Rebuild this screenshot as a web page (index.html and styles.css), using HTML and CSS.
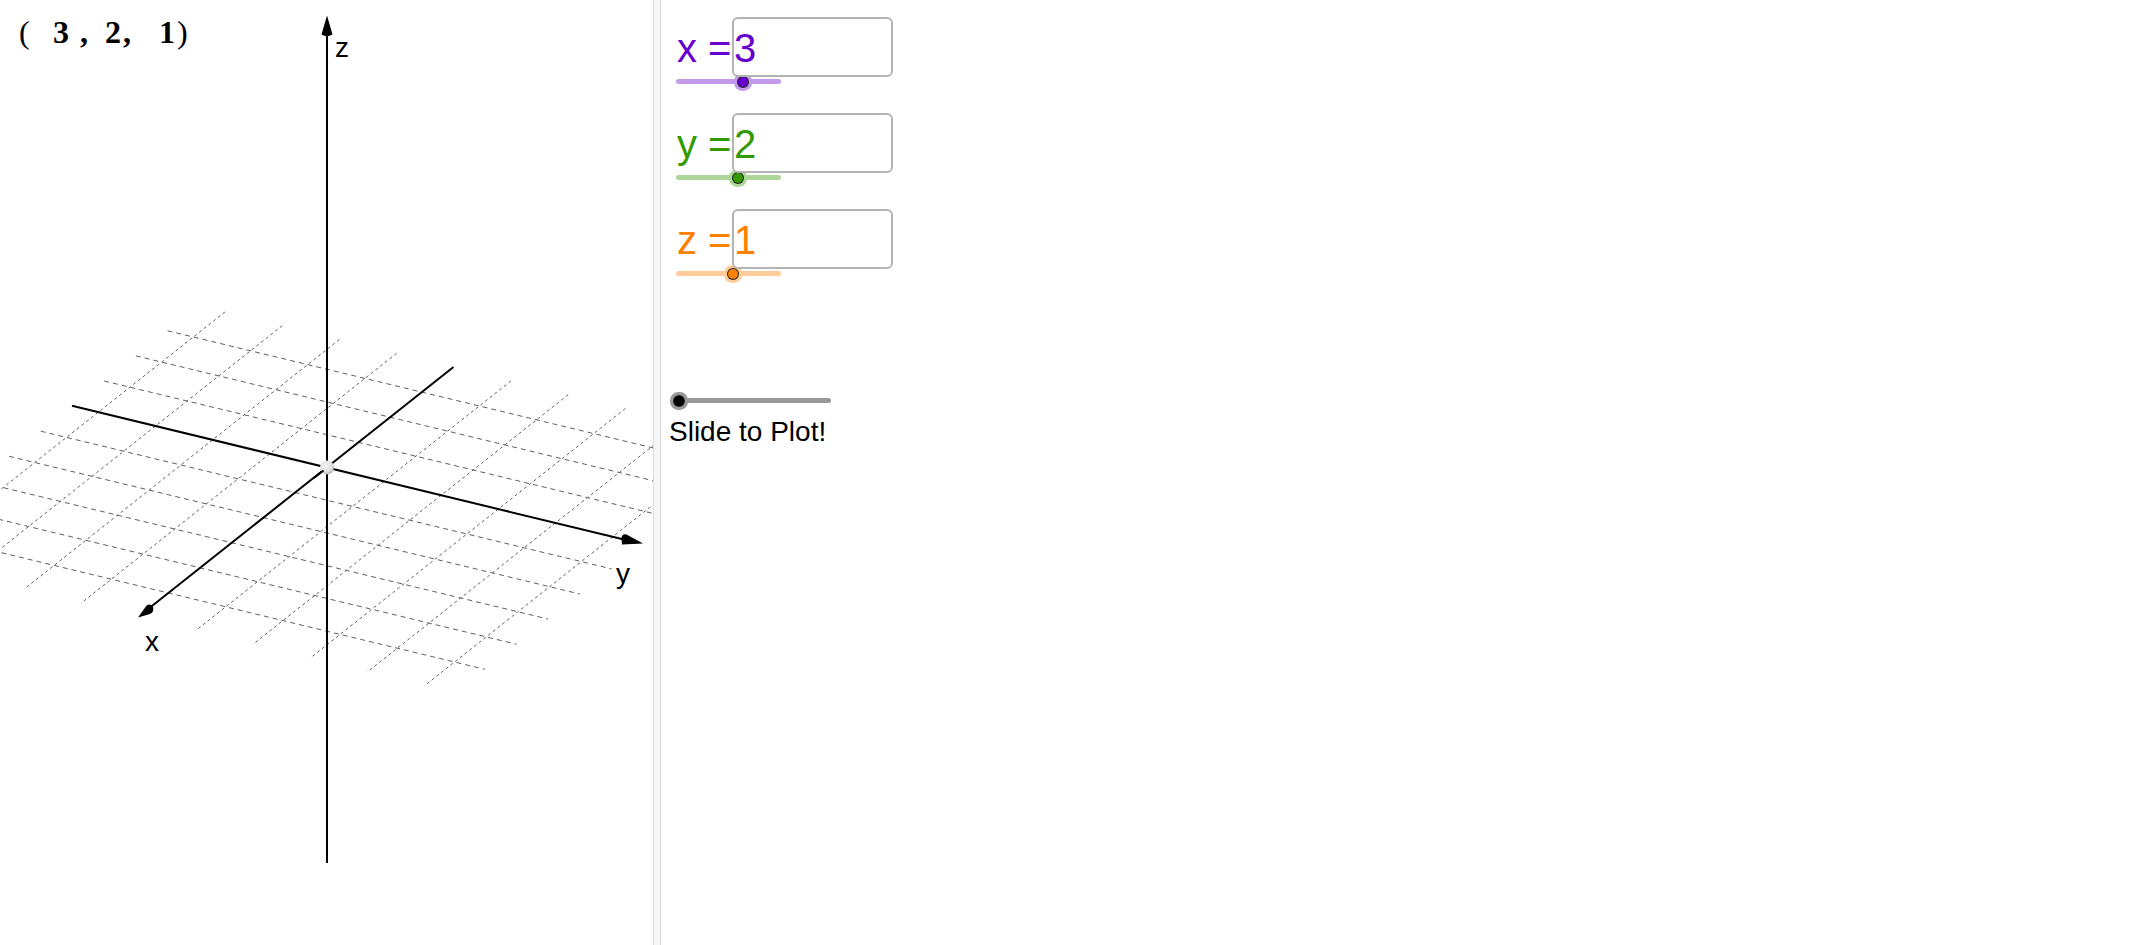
FILE: index.html
```html
<!DOCTYPE html>
<html lang="en">

<head>
    <meta charset="UTF-8">
    <meta name="viewport" content="width=device-width, initial-scale=1.0">
    <title>Plotting Points in 3D</title>
    <link rel="stylesheet" href="styles.css">
</head>

<body>
    <div class="wrapper">
        <div class="view3d">
            <svg class="scene">
                <defs>
                    <radialGradient id="ball" cx="0.4" cy="0.35" r="0.7">
                        <stop offset="0" stop-color="#f4f4f4" />
                        <stop offset="0.6" stop-color="#e2e2e2" />
                        <stop offset="1" stop-color="#b0b0b0" />
                    </radialGradient>
                </defs>
                <!-- grid lines are added by script.js -->
                <g class="grid"></g>

                <!-- axes -->
                <g class="axes">
                    <line x1="327" y1="863" x2="327" y2="30" />
                    <line x1="453.5" y1="367" x2="145" y2="611.5" />
                    <line x1="72" y1="405.8" x2="626" y2="540" />
                </g>
                <path d="M327 15.5 L332.5 34.5 Q327 38 321.5 34.5 Z" />
                <path d="M138 617.5 L146.5 605.5 Q150.5 603 153 607 Q154.5 612 150 614 Z" />
                <path d="M643 543.5 L626.5 534.5 Q621.5 533.5 621.5 539 L622 544.5 Z" />
                <circle cx="327" cy="467.5" r="7" fill="url(#ball)" />
                <path class="over" d="M314 478 L323.5 470.5" />

                <g class="name">
                    <text x="335" y="57">z</text>
                    <text x="145" y="651">x</text>
                    <text x="616" y="583">y</text>
                </g>
                <g class="point">
                    <text class="paren" x="19" y="43">(</text>
                    <text x="53" y="43">3</text>
                    <text x="80" y="43">,</text>
                    <text x="105" y="43">2</text>
                    <text x="123" y="43">,</text>
                    <text x="159" y="43">1</text>
                    <text class="paren" x="177" y="43">)</text>
                </g>
            </svg>
        </div>
        <div class="divider"></div>
        <div class="view2d">
            <div class="row row-x">
                <div class="field">
                    <label for="x">x =</label>
                    <input class="box" type="text" id="x" value="3">
                </div>
                <input class="slider" type="range" min="-10" max="10" value="3" aria-label="x">
            </div>
            <div class="row row-y">
                <div class="field">
                    <label for="y">y =</label>
                    <input class="box" type="text" id="y" value="2">
                </div>
                <input class="slider" type="range" min="-10" max="10" value="2" aria-label="y">
            </div>
            <div class="row row-z">
                <div class="field">
                    <label for="z">z =</label>
                    <input class="box" type="text" id="z" value="1">
                </div>
                <input class="slider" type="range" min="-10" max="10" value="1" aria-label="z">
            </div>
            <div class="plot">
                <input class="slider" type="range" id="plot" min="0" max="3" step="0.01" value="0">
                <label for="plot">Slide to Plot!</label>
            </div>
        </div>
    </div>

    <script src="script.js"></script>
</body>

</html>
```

FILE: styles.css
```css
html,
body {
    height: 100%;
    margin: 0;
    background-color: #fff;
    font-family: "Liberation Sans", Arial, sans-serif;
    color: #000;
}

.wrapper {
    display: flex;
    height: 100%;
}

/* 3D view */
.view3d {
    flex: 0 0 653px;
    overflow: hidden;
}

.scene {
    display: block;
    width: 100%;
    height: 100%;
}

.grid line {
    stroke: #606060;
    stroke-width: 1;
}

.grid .along-x {
    stroke-dasharray: 3 3;
}

.grid .along-y {
    stroke-dasharray: 5 4;
}

.axes line,
.over {
    stroke: #000;
    stroke-width: 2;
}

.name {
    font-size: 28px;
}

.point {
    font-family: "Liberation Serif", "Times New Roman", serif;
    font-size: 32px;
    font-weight: bold;
}

.point .paren {
    font-weight: normal;
}

.divider {
    flex: 0 0 6px;
    background-color: #f7f7f7;
    border-left: 1px solid #dcdcdc;
    border-right: 1px solid #dcdcdc;
}

/* controls */
.view2d {
    flex: 1;
    padding: 17px 8px;
}

.row {
    width: 224px;
    height: 67px;
    margin: 0 0 29px 7px;
}

.field {
    display: flex;
    align-items: center;
    position: relative;
    z-index: 1;
}

.field label {
    width: 55px;
    margin-left: 1px;
    padding-top: 2px;
    font-size: 40px;
    white-space: nowrap;
}

.box {
    box-sizing: border-box;
    width: 161px;
    height: 60px;
    padding: 2px 0 0 0;
    border: 2px solid #b4b4b4;
    border-radius: 6px;
    outline: none;
    background-color: #fff;
    color: inherit;
    font-family: inherit;
    font-size: 40px;
}

.slider {
    -webkit-appearance: none;
    appearance: none;
    display: block;
    width: 105px;
    height: 5px;
    margin: 2px 0 0;
    border-radius: 3px;
    outline: none;
    background-color: var(--track);
}

.slider::-webkit-slider-thumb {
    -webkit-appearance: none;
    width: 6px;
    height: 6px;
    border-radius: 50%;
    background-color: var(--main);
    box-shadow: 0 0 0 2px var(--main), 0 0 0 3px #222, 0 0 0 6px var(--track);
}

.row-x {
    --main: #6600cc;
    --track: #c299eb;
    color: #6600cc;
}

.row-y {
    --main: #339900;
    --track: #add699;
    color: #339900;
}

.row-z {
    --main: #ff8000;
    --track: #ffcc99;
    color: #ff8000;
}

.plot {
    --main: #000;
    --track: #999;
    display: flex;
    flex-direction: column;
    width: 162px;
    margin-top: 120px;
}

.plot .slider {
    width: 155px;
    margin-left: 7px;
}

.plot label {
    margin-top: 13px;
    font-size: 28px;
    line-height: 32px;
    white-space: nowrap;
}
```

FILE: script.js
```js
// projection of the xOy plane onto the screen
var origin = { x: 327, y: 467.5 };
var ux = { x: -31.7, y: 25.1 };
var uy = { x: 57.2, y: 13.8 };
var grid = document.querySelector('.grid');

function project(x, y) {
    return {
        x: origin.x + x * ux.x + y * uy.x,
        y: origin.y + x * ux.y + y * uy.y
    };
}

function addLine(a, b, name) {
    var line = document.createElementNS('http://www.w3.org/2000/svg', 'line');
    line.setAttribute('x1', a.x);
    line.setAttribute('y1', a.y);
    line.setAttribute('x2', b.x);
    line.setAttribute('y2', b.y);
    line.setAttribute('class', name);
    grid.appendChild(line);
}

// the lines at 0 are the axes themselves
for (var i = -4; i <= 5; i++) {
    if (i === 0) continue;
    addLine(project(-4, i), project(5.95, i), 'along-x');
    if (i > -4) {
        addLine(project(i, -4.45), project(i, 5.53), 'along-y');
    }
}
```
